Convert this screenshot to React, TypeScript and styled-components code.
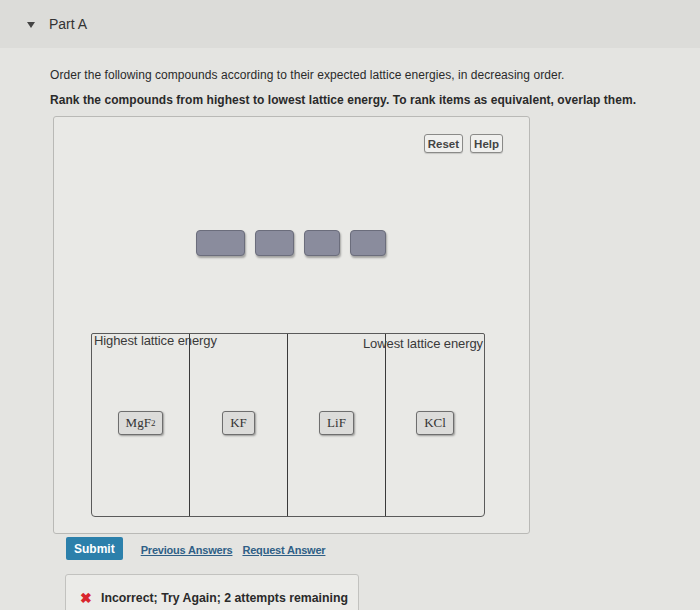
import React from "react";
import styled, { createGlobalStyle } from "styled-components";

const GlobalStyle = createGlobalStyle`
  html, body {
    margin: 0;
    padding: 0;
    background: #e4e4e1;
  }
  body {
    font-family: "Liberation Sans", Arial, sans-serif;
    color: #2c2c2c;
  }
`;

const Page = styled.div`
  width: 700px;
  height: 610px;
  overflow: hidden;
  background: #e4e4e1;
`;

const PartHeader = styled.div`
  height: 48px;
  padding-left: 27px;
  display: flex;
  align-items: center;
  gap: 14px;
  background: #dcdcd9;
  font-size: 14px;
  color: #333;
`;

const Caret = styled.span`
  width: 0;
  height: 0;
  border-left: 4px solid transparent;
  border-right: 4px solid transparent;
  border-top: 6px solid #444;
  margin-top: 2px;
`;

const Body = styled.div`
  padding: 20px 0 0 50px;
`;

const Prompt = styled.p<{ $bold?: boolean }>`
  margin: 0 0 ${(p) => (p.$bold ? "9px" : "11px")};
  font-size: 12px;
  line-height: 14px;
  font-weight: ${(p) => (p.$bold ? 700 : 400)};
  letter-spacing: ${(p) => (p.$bold ? "0.05px" : "0.05px")};
  color: #2a2a2a;
`;

const Panel = styled.div`
  margin-left: 3px;
  width: 475px;
  height: 416px;
  border: 1px solid #b9b9b6;
  border-radius: 3px;
  background: #e9e9e6;
  display: flex;
  flex-direction: column;
`;

const Toolbar = styled.div`
  display: flex;
  justify-content: flex-end;
  gap: 7px;
  padding: 17px 26px 0 0;
`;

const ToolButton = styled.button`
  height: 19px;
  padding: 0 3px;
  border: 1px solid #8a8a88;
  border-radius: 3px;
  background: #f0f0ee;
  font-family: "Liberation Sans", Arial, sans-serif;
  font-size: 11.5px;
  font-weight: 700;
  color: #444;
  box-shadow: 0 1px 1px rgba(0, 0, 0, 0.15);
`;

const SlotRow = styled.div`
  display: flex;
  gap: 10px;
  padding: 77px 0 0 142px;
`;

const Slot = styled.div<{ $w: number }>`
  width: ${(p) => p.$w}px;
  height: 24px;
  border: 1px solid #6b6d7c;
  border-radius: 4px;
  background: #8a8c9d;
  box-shadow: 1px 2px 2px rgba(0, 0, 0, 0.3);
`;

const RankArea = styled.div`
  position: relative;
  margin: 77px 0 0 37px;
  width: 392px;
  height: 182px;
  border: 1.5px solid #5a5a5a;
  border-radius: 2px 2px 4px 4px;
  display: grid;
  grid-template-columns: repeat(4, 1fr);
`;

const Column = styled.div<{ $last?: boolean }>`
  border-right: ${(p) => (p.$last ? "none" : "1.5px solid #3a3a3a")};
  display: flex;
  align-items: center;
  justify-content: center;
  padding-bottom: 4px;
`;

const EndLabel = styled.span<{ $side: "left" | "right" }>`
  position: absolute;
  top: ${(p) => (p.$side === "left" ? "-1px" : "2px")};
  ${(p) => (p.$side === "left" ? "left: 2px;" : "right: 1px;")}
  font-size: 13px;
  letter-spacing: -0.1px;
  color: #3a3a3a;
  pointer-events: none;
`;

const Chip = styled.div`
  height: 24px;
  padding: 0 7px;
  display: flex;
  align-items: center;
  box-sizing: border-box;
  border: 1px solid #6e6e6e;
  border-radius: 3px;
  background: #dcdcda;
  box-shadow: 1px 1px 2px rgba(0, 0, 0, 0.35);
  font-family: "Liberation Serif", "Times New Roman", serif;
  font-size: 13px;
  color: #333;

  sub {
    font-size: 9px;
    vertical-align: -2px;
  }
`;

const Actions = styled.div`
  display: flex;
  align-items: center;
  gap: 18px;
  padding: 3px 0 0 16px;
`;

const SubmitButton = styled.button`
  height: 23px;
  padding: 0 8px;
  border: none;
  border-radius: 2px;
  background: #2c80ab;
  color: #fff;
  font-family: "Liberation Sans", Arial, sans-serif;
  font-size: 12px;
  font-weight: 700;
`;

const LinkGroup = styled.div`
  display: flex;
  gap: 10px;
  margin-top: 3px;
`;

const TextLink = styled.a`
  font-size: 11px;
  font-weight: 700;
  letter-spacing: -0.2px;
  color: #2f5f86;
  text-decoration: underline;
`;

const Feedback = styled.div`
  margin: 14px 0 0 15px;
  width: 294px;
  height: 48px;
  border: 1px solid #c2c2bf;
  border-radius: 3px;
  background: #ebebe8;
  display: flex;
  align-items: center;
  gap: 9px;
  padding-left: 14px;
  box-sizing: border-box;
  font-size: 12.3px;
  font-weight: 700;
  color: #2a2a2a;
`;

const CrossMark = styled.span`
  color: #d9252d;
  font-size: 14px;
  font-weight: 900;
  line-height: 1;
`;

const slotWidths = [47, 37, 34, 34];

const items: React.ReactNode[] = [
  <>
    MgF<sub>2</sub>
  </>,
  "KF",
  "LiF",
  "KCl",
];

export default function App() {
  return (
    <Page>
      <GlobalStyle />
      <PartHeader>
        <Caret />
        Part A
      </PartHeader>
      <Body>
        <Prompt>
          Order the following compounds according to their expected lattice
          energies, in decreasing order.
        </Prompt>
        <Prompt $bold>
          Rank the compounds from highest to lowest lattice energy. To rank
          items as equivalent, overlap them.
        </Prompt>
        <Panel>
          <Toolbar>
            <ToolButton>Reset</ToolButton>
            <ToolButton>Help</ToolButton>
          </Toolbar>
          <SlotRow>
            {slotWidths.map((w, i) => (
              <Slot key={i} $w={w} />
            ))}
          </SlotRow>
          <RankArea>
            {items.map((item, i) => (
              <Column key={i} $last={i === items.length - 1}>
                <Chip>{item}</Chip>
              </Column>
            ))}
            <EndLabel $side="left">Highest lattice energy</EndLabel>
            <EndLabel $side="right">Lowest lattice energy</EndLabel>
          </RankArea>
        </Panel>
        <Actions>
          <SubmitButton>Submit</SubmitButton>
          <LinkGroup>
            <TextLink>Previous Answers</TextLink>
            <TextLink>Request Answer</TextLink>
          </LinkGroup>
        </Actions>
        <Feedback>
          <CrossMark>✖</CrossMark>
          Incorrect; Try Again; 2 attempts remaining
        </Feedback>
      </Body>
    </Page>
  );
}
